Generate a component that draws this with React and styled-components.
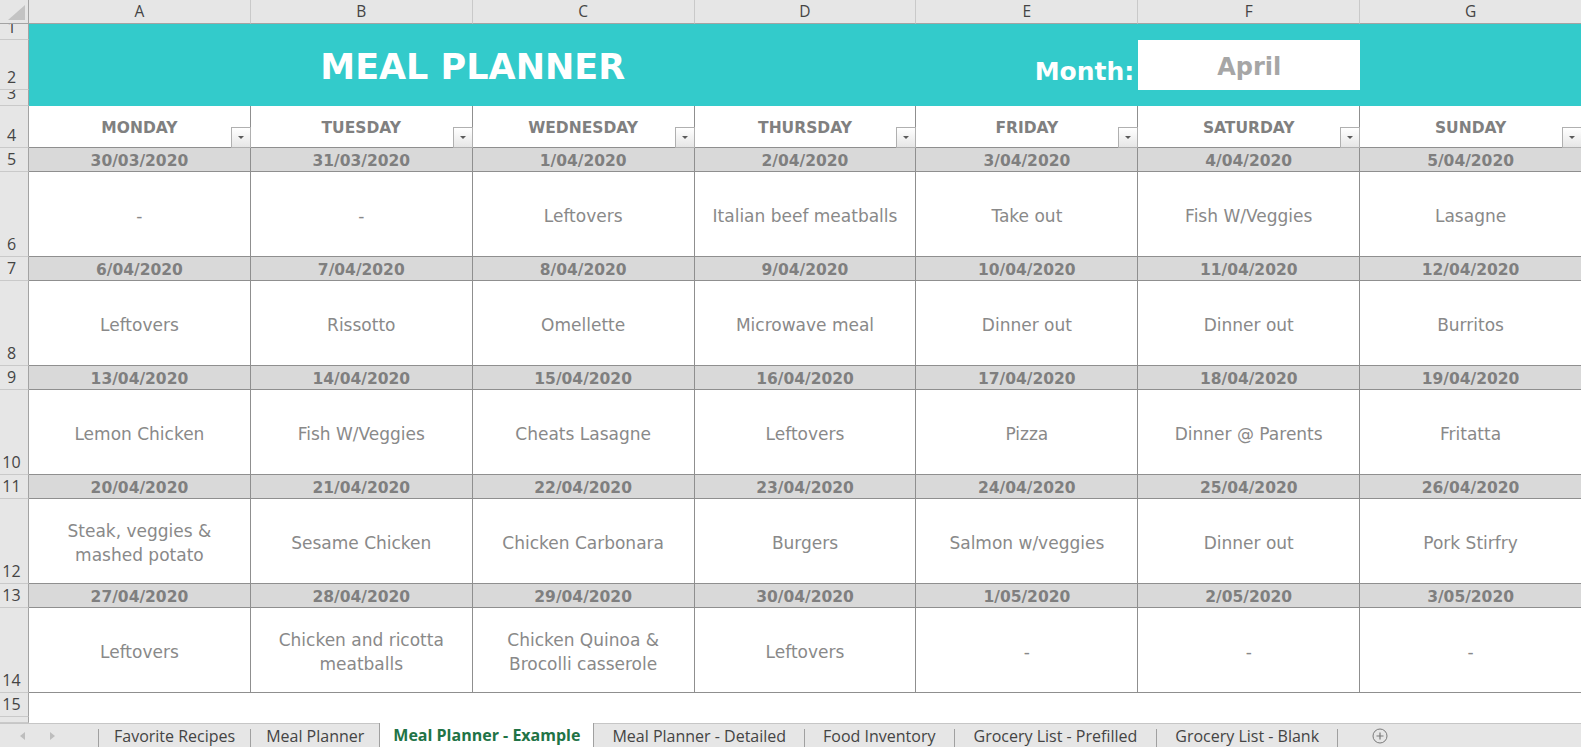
import React from "react";
import styled, { createGlobalStyle } from "styled-components";

const GlobalStyle = createGlobalStyle`
  html, body { margin: 0; padding: 0; background: #fff; overflow: hidden; }
  body { font-family: "DejaVu Sans", sans-serif; }
  * { box-sizing: border-box; }
`;

const COLS = ["A", "B", "C", "D", "E", "F", "G"];
const DAYS = ["MONDAY", "TUESDAY", "WEDNESDAY", "THURSDAY", "FRIDAY", "SATURDAY", "SUNDAY"];
const WEEKS = [
  {
    dates: ["30/03/2020", "31/03/2020", "1/04/2020", "2/04/2020", "3/04/2020", "4/04/2020", "5/04/2020"],
    meals: ["-", "-", "Leftovers", "Italian beef meatballs", "Take out", "Fish W/Veggies", "Lasagne"],
  },
  {
    dates: ["6/04/2020", "7/04/2020", "8/04/2020", "9/04/2020", "10/04/2020", "11/04/2020", "12/04/2020"],
    meals: ["Leftovers", "Rissotto", "Omellette", "Microwave meal", "Dinner out", "Dinner out", "Burritos"],
  },
  {
    dates: ["13/04/2020", "14/04/2020", "15/04/2020", "16/04/2020", "17/04/2020", "18/04/2020", "19/04/2020"],
    meals: ["Lemon Chicken", "Fish W/Veggies", "Cheats Lasagne", "Leftovers", "Pizza", "Dinner @ Parents", "Fritatta"],
  },
  {
    dates: ["20/04/2020", "21/04/2020", "22/04/2020", "23/04/2020", "24/04/2020", "25/04/2020", "26/04/2020"],
    meals: ["Steak, veggies & mashed potato", "Sesame Chicken", "Chicken Carbonara", "Burgers", "Salmon w/veggies", "Dinner out", "Pork Stirfry"],
  },
  {
    dates: ["27/04/2020", "28/04/2020", "29/04/2020", "30/04/2020", "1/05/2020", "2/05/2020", "3/05/2020"],
    meals: ["Leftovers", "Chicken and ricotta meatballs", "Chicken Quinoa & Brocolli casserole", "Leftovers", "-", "-", "-"],
  },
];
const TABS = [
  { name: "Favorite Recipes", pad: 15 },
  { name: "Meal Planner", pad: 15 },
  { name: "Meal Planner - Example", pad: 13, active: true },
  { name: "Meal Planner - Detailed", pad: 18 },
  { name: "Food Inventory", pad: 18 },
  { name: "Grocery List - Prefilled", pad: 19 },
  { name: "Grocery List - Blank", pad: 18 },
];

const LINE = "#8f8f8f";
const HEAD_BG = "#e6e6e6";
const HEAD_LINE = "#c9c9c9";
const HEAD_EDGE = "#a3a3a3";

const Sheet = styled.div`
  width: 1582px;
  height: 747px;
  display: flex;
  flex-direction: column;
  overflow: hidden;
`;

const Grid = styled.div`
  flex: none;
  display: grid;
  grid-template-columns: 29px repeat(7, 1fr);
  grid-template-rows: 24px 16px 50px 16px 42px repeat(5, 24px 85px) 24px 6px;
`;

const Corner = styled.div`
  background: ${HEAD_BG};
  border-right: 1px solid ${HEAD_EDGE};
  border-bottom: 1px solid ${HEAD_EDGE};
  display: flex;
  align-items: flex-end;
  justify-content: flex-end;
  padding: 0 3px 3px 0;
`;

const ColHead = styled.div`
  background: ${HEAD_BG};
  border-right: 1px solid ${HEAD_LINE};
  border-bottom: 1px solid ${HEAD_EDGE};
  font-family: "Open Sans", "Noto Sans", sans-serif;
  font-size: 15.5px;
  color: #444;
  line-height: 23px;
  text-align: center;
`;

const RowHead = styled.div`
  background: ${HEAD_BG};
  border-right: 1px solid ${HEAD_EDGE};
  border-bottom: 1px solid ${HEAD_LINE};
  display: flex;
  align-items: flex-end;
  justify-content: center;
  padding: 0 5px 2px 0;
  overflow: hidden;
  font-family: "Open Sans", "Noto Sans", sans-serif;
  font-size: 16px;
  line-height: 20px;
  color: #444;
`;

const Band = styled.div`
  grid-column: 2 / -1;
  grid-row: 2 / span 3;
  background: #33cbcb;
  display: grid;
  grid-template-columns: repeat(7, 1fr);
  grid-template-rows: 16px 50px 16px;
`;

const Title = styled.h1`
  grid-column: 1 / 5;
  grid-row: 2;
  margin: 0;
  display: flex;
  align-items: center;
  justify-content: center;
  font-family: "DejaVu Sans", sans-serif;
  font-weight: bold;
  font-size: 35px;
  color: #fff;
  padding-top: 3px;
`;

const MonthLabel = styled.div`
  grid-column: 5;
  grid-row: 2;
  display: flex;
  align-items: flex-end;
  justify-content: flex-end;
  padding: 0 4px 4px 0;
  font-weight: bold;
  font-size: 25px;
  color: #fff;
`;

const MonthBox = styled.div`
  grid-column: 6;
  grid-row: 2;
  background: #fff;
  display: flex;
  align-items: center;
  justify-content: center;
  padding-top: 3px;
  font-weight: bold;
  font-size: 24px;
  color: #a6a6a6;
`;

const Cell = styled.div`
  border-right: 1px solid ${LINE};
  border-bottom: 1px solid ${LINE};
  display: flex;
  align-items: center;
  justify-content: center;
  text-align: center;
`;

const DayHead = styled(Cell)`
  position: relative;
  padding-top: 2px;
  font-weight: bold;
  font-size: 15.5px;
  color: #808080;
`;

const Filter = styled.span`
  position: absolute;
  right: -1px;
  bottom: -1px;
  width: 20px;
  height: 21px;
  border: 1px solid #b0b0b0;
  background: linear-gradient(#ffffff, #e6e6e6);
  display: flex;
  align-items: center;
  justify-content: center;
  &::after {
    content: "";
    border-left: 3px solid transparent;
    border-right: 3px solid transparent;
    border-top: 3px solid #5a5a5a;
  }
`;

const DateCell = styled(Cell)`
  background: #d9d9d9;
  padding-top: 2px;
  font-weight: bold;
  font-size: 15.5px;
  color: #7f7f7f;
`;

const MealCell = styled(Cell)`
  padding: 6px 8px 0;
  font-size: 17px;
  line-height: 1.4;
  color: #898989;
`;

const Blank = styled.div`
  grid-column: span 7;
  background: #fff;
`;

const TabBar = styled.div`
  flex: none;
  height: 24px;
  display: flex;
  align-items: stretch;
  background: #e6e6e6;
  border-top: 1px solid #c6c6c6;
  font-family: "Open Sans", "Noto Sans", sans-serif;
  font-size: 16px;
  color: #444;
`;

const Nav = styled.div`
  width: 98px;
  display: flex;
  align-items: center;
  gap: 25px;
  padding-left: 20px;
`;

const Sep = styled.span`
  align-self: flex-end;
  width: 1px;
  height: 18px;
  background: #a0a0a0;
`;

const Tab = styled.div`
  display: flex;
  align-items: center;
  white-space: nowrap;
  padding: 0 ${(p) => p.$pad}px;
  margin-top: ${(p) => (p.$active ? "-1px" : "0")};
  background: ${(p) => (p.$active ? "#fff" : "transparent")};
  color: ${(p) => (p.$active ? "#217346" : "#444")};
  font-weight: ${(p) => (p.$active ? "bold" : "normal")};
  border-left: ${(p) => (p.$active ? "1px solid #a0a0a0" : "none")};
  border-right: ${(p) => (p.$active ? "1px solid #a0a0a0" : "none")};
`;

const AddSheet = styled.div`
  display: flex;
  align-items: center;
  padding-left: 34px;
`;

const Arrow = ({ dir }) => (
  <svg width="5" height="8" viewBox="0 0 5 8">
    <path d={dir === "left" ? "M5 0 L0 4 L5 8 Z" : "M0 0 L5 4 L0 8 Z"} fill="#bdbdbd" />
  </svg>
);

export default function App() {
  const activeIndex = TABS.findIndex((t) => t.active);
  return (
    <Sheet>
      <GlobalStyle />
      <Grid>
        <Corner>
          <svg width="17" height="15" viewBox="0 0 17 15">
            <path d="M17 0 L17 15 L0 15 Z" fill="#c3c3c3" />
          </svg>
        </Corner>
        {COLS.map((c) => (
          <ColHead key={c}>{c}</ColHead>
        ))}

        <RowHead>1</RowHead>
        <Band>
          <Title>MEAL PLANNER</Title>
          <MonthLabel>Month:</MonthLabel>
          <MonthBox>April</MonthBox>
        </Band>
        <RowHead>2</RowHead>
        <RowHead>3</RowHead>

        <RowHead>4</RowHead>
        {DAYS.map((d) => (
          <DayHead key={d}>
            {d}
            <Filter />
          </DayHead>
        ))}

        {WEEKS.map((w, i) => (
          <React.Fragment key={i}>
            <RowHead>{5 + i * 2}</RowHead>
            {w.dates.map((d) => (
              <DateCell key={d}>{d}</DateCell>
            ))}
            <RowHead>{6 + i * 2}</RowHead>
            {w.meals.map((m, j) => (
              <MealCell key={j}>{m}</MealCell>
            ))}
          </React.Fragment>
        ))}

        <RowHead>15</RowHead>
        <Blank />
        <RowHead />
        <Blank />
      </Grid>

      <TabBar>
        <Nav>
          <Arrow dir="left" />
          <Arrow dir="right" />
        </Nav>
        {TABS.map((t, i) => (
          <React.Fragment key={t.name}>
            {i !== activeIndex && i !== activeIndex + 1 && <Sep />}
            <Tab $active={!!t.active} $pad={t.pad}>
              {t.name}
            </Tab>
          </React.Fragment>
        ))}
        <Sep />
        <AddSheet>
          <svg width="16" height="16" viewBox="0 0 16 16">
            <circle cx="8" cy="8" r="7" fill="none" stroke="#7a7a7a" strokeWidth="1" />
            <path d="M8 4.5 V11.5 M4.5 8 H11.5" stroke="#7a7a7a" strokeWidth="1.2" />
          </svg>
        </AddSheet>
      </TabBar>
    </Sheet>
  );
}
